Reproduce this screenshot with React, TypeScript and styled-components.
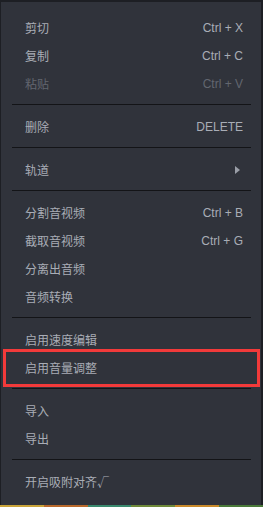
import React from 'react';
import styled, { createGlobalStyle } from 'styled-components';

const GlobalStyle = createGlobalStyle`
  html, body {
    margin: 0;
    padding: 0;
    background: #1d1f24;
  }
  body {
    width: 263px;
    height: 507px;
    overflow: hidden;
  }
`;

type Item =
  | { kind: 'item'; label: string; shortcut?: string; disabled?: boolean; submenu?: boolean; highlight?: boolean }
  | { kind: 'sep' };

const items: Item[] = [
  { kind: 'item', label: '剪切', shortcut: 'Ctrl + X' },
  { kind: 'item', label: '复制', shortcut: 'Ctrl + C' },
  { kind: 'item', label: '粘贴', shortcut: 'Ctrl + V', disabled: true },
  { kind: 'sep' },
  { kind: 'item', label: '删除', shortcut: 'DELETE' },
  { kind: 'sep' },
  { kind: 'item', label: '轨道', submenu: true },
  { kind: 'sep' },
  { kind: 'item', label: '分割音视频', shortcut: 'Ctrl + B' },
  { kind: 'item', label: '截取音视频', shortcut: 'Ctrl + G' },
  { kind: 'item', label: '分离出音频' },
  { kind: 'item', label: '音频转换' },
  { kind: 'sep' },
  { kind: 'item', label: '启用速度编辑' },
  { kind: 'item', label: '启用音量调整', highlight: true },
  { kind: 'sep' },
  { kind: 'item', label: '导入' },
  { kind: 'item', label: '导出' },
  { kind: 'sep' },
  { kind: 'item', label: '开启吸附对齐√' },
];

const Page = styled.div`
  display: flex;
  flex-direction: column;
  height: 507px;
`;

const Menu = styled.div`
  margin: 2px 2px 0 1px;
  padding: 12px 0 9px;
  background: #30333b;
  display: flex;
  flex-direction: column;
`;

const Row = styled.div<{ $disabled?: boolean }>`
  position: relative;
  height: 28px;
  display: flex;
  align-items: center;
  justify-content: space-between;
  padding: 0 18px 0 24px;
  color: ${({ $disabled }) => ($disabled ? '#62666f' : '#a9adb6')};
`;

const Label = styled.span`
  font-family: "Noto Sans CJK SC", "Liberation Sans", sans-serif;
  font-size: 12px;
  line-height: 28px;
`;

const Shortcut = styled.span`
  font-family: "Liberation Sans", Arial, sans-serif;
  font-size: 12px;
  line-height: 28px;
`;

const Arrow = styled.span`
  width: 0;
  height: 0;
  margin-right: 3px;
  border-top: 4px solid transparent;
  border-bottom: 4px solid transparent;
  border-left: 5px solid #9a9ea7;
`;

const Highlight = styled.div`
  position: absolute;
  top: -5px;
  bottom: -5px;
  left: 2px;
  right: 1px;
  border: 3px solid #f23a3a;
  pointer-events: none;
`;

const Separator = styled.div`
  height: 1px;
  margin: 6px 10px 8px 11px;
  background: #131417;
`;

const Strip = styled.div`
  flex: 1;
  display: flex;
`;

const Chip = styled.div<{ $color: string }>`
  flex: 1;
  background: ${({ $color }) => $color};
`;

const stripColors = ['#c9a43a', '#b96a2c', '#3a8a6e', '#6f8a3a', '#c98a2a', '#4a7a3a'];

export default function App() {
  return (
    <>
      <GlobalStyle />
      <Page>
        <Menu>
          {items.map((item, i) =>
            item.kind === 'sep' ? (
              <Separator key={i} />
            ) : (
              <Row key={i} $disabled={item.disabled}>
                <Label>{item.label}</Label>
                {item.shortcut && <Shortcut>{item.shortcut}</Shortcut>}
                {item.submenu && <Arrow />}
                {item.highlight && <Highlight />}
              </Row>
            )
          )}
        </Menu>
        <Strip>
          {stripColors.map((c, i) => (
            <Chip key={i} $color={c} />
          ))}
        </Strip>
      </Page>
    </>
  );
}
